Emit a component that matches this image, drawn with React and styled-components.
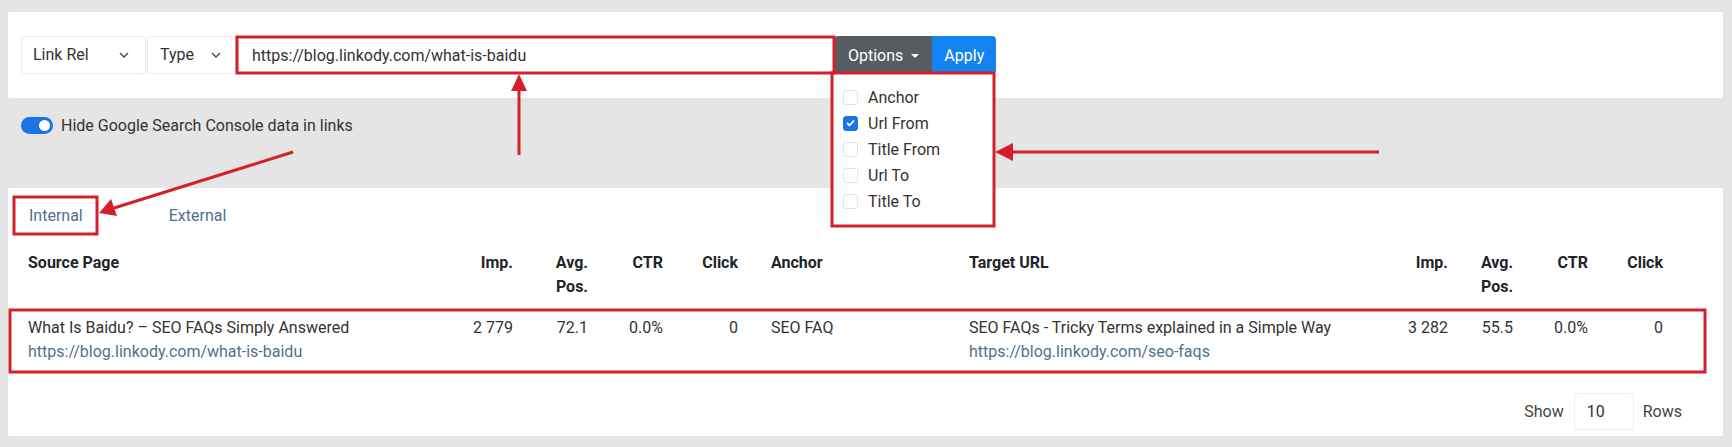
import React from 'react';
import styled, { createGlobalStyle } from 'styled-components';

const GlobalStyle = createGlobalStyle`
  html, body {
    margin: 0;
    padding: 0;
    background: #e5e5e5;
  }
  body {
    font-family: Roboto, "Liberation Sans", sans-serif;
    font-size: 16px;
    color: #333;
  }
  * { box-sizing: border-box; }
`;

const RED = '#d4202a';

const Page = styled.div`
  position: relative;
  width: 1732px;
  height: 447px;
  padding: 12px 9px 11px 8px;
  display: flex;
  flex-direction: column;
  overflow: hidden;
`;

const Card = styled.div`
  background: #fff;
  border-radius: 2px;
`;

const FilterCard = styled(Card)`
  height: 86px;
  padding: 24px 13px;
`;

const Controls = styled.div`
  display: flex;
  align-items: stretch;
  height: 38px;
`;

const Select = styled.div`
  width: ${(p) => p.$w}px;
  margin-right: ${(p) => p.$gap || 0}px;
  display: flex;
  align-items: center;
  justify-content: space-between;
  padding: 0 ${(p) => p.$pr}px 0 ${(p) => p.$pl}px;
  border: 1px solid #ececec;
  border-radius: 3px;
  color: #333;
  line-height: 1;
`;

const UrlInput = styled.div`
  width: 597px;
  display: flex;
  align-items: center;
  padding: 0 14px;
  border: 1px solid #ececec;
  color: #333;
`;

const OptionsWrap = styled.div`
  position: relative;
  margin-left: 1px;
`;

const Button = styled.div`
  height: 100%;
  display: flex;
  align-items: center;
  gap: 8px;
  padding: 0 ${(p) => p.$px}px;
  color: #fff;
  background: ${(p) => p.$bg};
  border-radius: ${(p) => p.$radius};
`;

const Caret = styled.span`
  width: 0;
  height: 0;
  border-left: 4px solid transparent;
  border-right: 4px solid transparent;
  border-top: 4px solid #fff;
  margin-top: 1px;
`;

const Menu = styled.div`
  position: absolute;
  top: 100%;
  left: -2px;
  width: 160px;
  height: 152px;
  padding: 10px 0 12px 10px;
  background: #fff;
  z-index: 2;
`;

const MenuItem = styled.label`
  height: 26px;
  display: flex;
  align-items: center;
  gap: 10px;
  color: #333;
`;

const Check = styled.span`
  width: 15px;
  height: 15px;
  border-radius: 3px;
  border: 1px solid ${(p) => (p.$on ? '#1a73e8' : '#e3e3e3')};
  background: ${(p) => (p.$on ? '#1a73e8' : '#fff')};
  display: flex;
  align-items: center;
  justify-content: center;
`;

const ToggleRow = styled.div`
  height: 90px;
  display: flex;
  align-items: flex-start;
  gap: 8px;
  padding: 19px 0 0 13px;
  line-height: 17px;
`;

const Switch = styled.span`
  width: 32px;
  height: 17px;
  border-radius: 9px;
  background: #1a73e8;
  position: relative;
  &::after {
    content: '';
    position: absolute;
    right: 3px;
    top: 3px;
    width: 11px;
    height: 11px;
    border-radius: 50%;
    background: #fff;
  }
`;

const TableCard = styled(Card)`
  flex: 1;
  padding: 9px 41px 6px 8px;
  display: flex;
  flex-direction: column;
`;

const Tabs = styled.div`
  display: flex;
  gap: 54px;
  margin-left: -3px;
  height: 37px;
`;

const Tab = styled.div`
  padding: 0 16px;
  display: flex;
  align-items: center;
  color: #52708f;
`;

const Table = styled.table`
  margin-top: 6px;
  width: 1668px;
  table-layout: fixed;
  border-collapse: collapse;
  line-height: 24px;
`;

const Th = styled.th`
  padding: 11px ${(p) => (p.$align === 'right' ? 21 : 12)}px 11px 12px;
  text-align: ${(p) => p.$align};
  vertical-align: top;
  font-weight: 700;
  color: #212529;
  white-space: nowrap;
`;

const Td = styled.td`
  padding: 6px ${(p) => (p.$align === 'right' ? 21 : 12)}px 8px 12px;
  text-align: ${(p) => p.$align};
  vertical-align: top;
  color: #333;
  white-space: nowrap;
`;

const UrlText = styled.div`
  color: #52708f;
`;

const Footer = styled.div`
  margin-top: 21px;
  height: 37px;
  display: flex;
  justify-content: flex-end;
  align-items: center;
  color: #444;
`;

const RowsInput = styled.div`
  width: 60px;
  height: 37px;
  margin: 0 9px 0 10px;
  padding-left: 12px;
  display: flex;
  align-items: center;
  border: 1px solid #eee;
  border-radius: 3px;
  color: #333;
`;

const Overlay = styled.svg`
  position: absolute;
  left: 0;
  top: 0;
  pointer-events: none;
  z-index: 5;
`;

const columns = [
  { key: 'src', label: ['Source Page'], w: 443, align: 'left' },
  { key: 'imp', label: ['Imp.'], w: 75, align: 'right' },
  { key: 'avg', label: ['Avg.', 'Pos.'], w: 75, align: 'right' },
  { key: 'ctr', label: ['CTR'], w: 75, align: 'right' },
  { key: 'click', label: ['Click'], w: 75, align: 'right' },
  { key: 'anchor', label: ['Anchor'], w: 198, align: 'left' },
  { key: 'target', label: ['Target URL'], w: 437, align: 'left' },
  { key: 'imp2', label: ['Imp.'], w: 75, align: 'right' },
  { key: 'avg2', label: ['Avg.', 'Pos.'], w: 65, align: 'right' },
  { key: 'ctr2', label: ['CTR'], w: 75, align: 'right' },
  { key: 'click2', label: ['Click'], w: 75, align: 'right' },
];

const row = {
  src: { title: 'What Is Baidu? – SEO FAQs Simply Answered', url: 'https://blog.linkody.com/what-is-baidu' },
  imp: '2 779',
  avg: '72.1',
  ctr: '0.0%',
  click: '0',
  anchor: 'SEO FAQ',
  target: { title: 'SEO FAQs - Tricky Terms explained in a Simple Way', url: 'https://blog.linkody.com/seo-faqs' },
  imp2: '3 282',
  avg2: '55.5',
  ctr2: '0.0%',
  click2: '0',
};

const menuItems = [
  { label: 'Anchor', on: false },
  { label: 'Url From', on: true },
  { label: 'Title From', on: false },
  { label: 'Url To', on: false },
  { label: 'Title To', on: false },
];

const Chevron = () => (
  <svg width="10" height="6" viewBox="0 0 10 6">
    <polyline points="1,1 5,5 9,1" fill="none" stroke="#444" strokeWidth="1.4" />
  </svg>
);

const Tick = () => (
  <svg width="9" height="8" viewBox="0 0 9 8">
    <polyline points="1,4 3.5,6.3 8,1.5" fill="none" stroke="#fff" strokeWidth="1.8" />
  </svg>
);

const Annotations = () => (
  <Overlay width="1732" height="447" viewBox="0 0 1732 447">
    <g fill="none" stroke={RED} strokeWidth="3">
      <rect x="237" y="37" width="597" height="36" />
      <rect x="832" y="73" width="162" height="153" />
      <rect x="14" y="197" width="83" height="37" />
      <rect x="10" y="310" width="1695" height="62" />
      <line x1="519" y1="155" x2="519" y2="88" />
      <line x1="1379" y1="152" x2="1011" y2="152" />
      <line x1="293" y1="152" x2="114" y2="208" />
    </g>
    <g fill={RED}>
      <polygon points="519,74 511,91 527,91" />
      <polygon points="995,152 1013,143 1013,161" />
      <polygon points="99,213 117,216 111,199" />
    </g>
  </Overlay>
);

export default function App() {
  return (
    <>
      <GlobalStyle />
      <Page>
        <FilterCard>
          <Controls>
            <Select $w={125} $pl={11} $pr={16} $gap={1}>
              Link Rel <Chevron />
            </Select>
            <Select $w={89} $pl={12} $pr={14} $gap={1}>
              Type <Chevron />
            </Select>
            <UrlInput>https://blog.linkody.com/what-is-baidu</UrlInput>
            <OptionsWrap>
              <Button $bg="#565c62" $px={13} $radius="3px 0 0 0">
                Options <Caret />
              </Button>
              <Menu>
                {menuItems.map((m) => (
                  <MenuItem key={m.label}>
                    <Check $on={m.on}>{m.on && <Tick />}</Check>
                    {m.label}
                  </MenuItem>
                ))}
              </Menu>
            </OptionsWrap>
            <Button $bg="#1283f0" $px={12} $radius="0 4px 4px 0">
              Apply
            </Button>
          </Controls>
        </FilterCard>

        <ToggleRow>
          <Switch />
          Hide Google Search Console data in links
        </ToggleRow>

        <TableCard>
          <Tabs>
            <Tab>Internal</Tab>
            <Tab>External</Tab>
          </Tabs>
          <Table>
            <colgroup>
              {columns.map((c) => (
                <col key={c.key} style={{ width: c.w }} />
              ))}
            </colgroup>
            <thead>
              <tr>
                {columns.map((c) => (
                  <Th key={c.key} $align={c.align}>
                    {c.label.map((l, i) => (
                      <div key={i}>{l}</div>
                    ))}
                  </Th>
                ))}
              </tr>
            </thead>
            <tbody>
              <tr>
                {columns.map((c) => {
                  const v = row[c.key];
                  return (
                    <Td key={c.key} $align={c.align}>
                      {typeof v === 'string' ? (
                        v
                      ) : (
                        <>
                          <div>{v.title}</div>
                          <UrlText>{v.url}</UrlText>
                        </>
                      )}
                    </Td>
                  );
                })}
              </tr>
            </tbody>
          </Table>
          <Footer>
            Show
            <RowsInput>10</RowsInput>
            Rows
          </Footer>
        </TableCard>
        <Annotations />
      </Page>
    </>
  );
}
